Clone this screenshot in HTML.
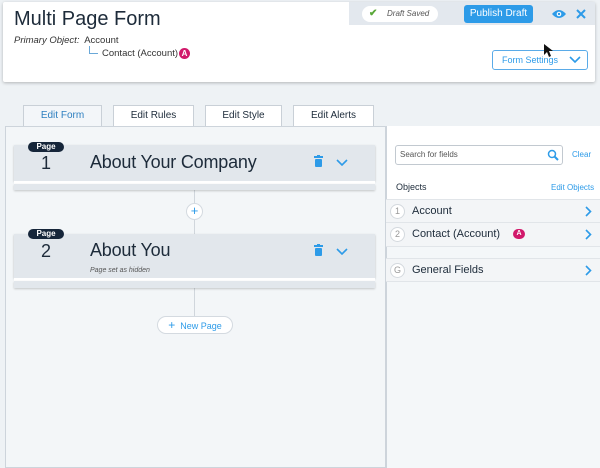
<!DOCTYPE html>
<html><head><style>
*{margin:0;padding:0;box-sizing:border-box}
body{width:600px;height:468px;overflow:hidden;background:#eef2f5;font-family:"Liberation Sans",sans-serif;position:relative;color:#1d2b3a}
.a{position:absolute}
.hdr{left:3px;top:2px;width:592px;height:80px;background:#fff;box-shadow:0 1px 3px rgba(0,0,0,.25);border-radius:2px}
.tab{top:105px;height:21px;background:#fff;border:1px solid #c9d0d7;border-bottom:none;font-size:10px;text-align:center;line-height:20px;color:#1d2b3a}
.card{left:14px;width:361px;background:#e2e7ec;box-shadow:0 1px 2px rgba(0,0,0,.25)}
.badge{background:#16263a;color:#fff;font-size:8px;font-weight:bold;border-radius:6px;width:36px;height:10px;line-height:10px;text-align:center}
.num{font-size:18px;width:36px;text-align:center}
.ttl{font-size:18px;letter-spacing:-0.2px}
.row{left:386px;width:214px;height:24px;background:#f3f5f7;border-bottom:1px solid #e1e5e9;font-size:11px;line-height:23px}
.circ{position:absolute;left:4px;top:4px;width:15px;height:15px;border:1px solid #d4d9de;border-radius:50%;background:#fff;font-size:9px;color:#999;text-align:center;line-height:13px}
.chev{position:absolute;right:8px;top:6px}
</style></head><body>
<div class="a hdr"></div>
<div class="a" style="left:349px;top:2px;width:246px;height:23px;background:#e3e8ee"></div>
<div class="a" style="left:362px;top:6px;width:76px;height:16px;background:#fff;border-radius:8px;font-size:8px;font-style:italic;color:#555;line-height:16px;padding-left:25px">Draft Saved</div>
<div class="a" style="left:369px;top:8px;color:#5aa83a;font-size:10px;font-weight:bold">✔</div>
<div class="a" style="left:464px;top:5px;width:69px;height:18px;background:#2d9be8;border-radius:3px;color:#fff;font-size:10px;text-align:center;line-height:18px">Publish Draft</div>
<svg class="a" style="left:551px;top:9px" width="16" height="10"><path d="M1 5Q8 -3 15 5Q8 13 1 5Z" fill="#2d9be8"/><circle cx="8" cy="5" r="2.3" fill="#fff"/><circle cx="8" cy="5" r="1.2" fill="#2d9be8"/></svg>
<svg class="a" style="left:576px;top:9px" width="10" height="10"><path d="M1 1L9 9M9 1L1 9" stroke="#2d9be8" stroke-width="2"/></svg>
<div class="a" style="left:14px;top:8px;font-size:20px;color:#1d2b3a">Multi Page Form</div>
<div class="a" style="left:14px;top:35px;font-size:9.5px;color:#333"><i>Primary Object:</i>&nbsp; Account</div>
<div class="a" style="left:89px;top:46px;width:9px;height:8px;border-left:1px solid #6aa8d8;border-bottom:1px solid #6aa8d8"></div>
<div class="a" style="left:102px;top:48px;font-size:9.5px;color:#333">Contact (Account)</div>
<div class="a" style="left:179px;top:48px;width:11px;height:11px;border-radius:50%;background:#d1196b;color:#fff;font-size:8px;font-weight:bold;text-align:center;line-height:11px">A</div>
<div class="a" style="left:492px;top:50px;width:96px;height:20px;border:1px solid #5aabe8;border-radius:3px;color:#2d9be8;font-size:9px;line-height:18px;padding-left:9px">Form Settings</div>
<svg class="a" style="left:569px;top:56px" width="12" height="8"><path d="M1 1L6 6L11 1" stroke="#2d9be8" stroke-width="1.6" fill="none"/></svg>
<svg class="a" style="left:543px;top:43px" width="10" height="15"><path d="M1 1L1 12L4 9L6 14L8 13L6 8L10 8Z" fill="#111"/></svg>

<div class="a tab" style="left:23px;width:79px;background:#f3f6f9;color:#2d7fc0">Edit Form</div>
<div class="a tab" style="left:113px;width:81px">Edit Rules</div>
<div class="a tab" style="left:205px;width:77px">Edit Style</div>
<div class="a tab" style="left:293px;width:81px">Edit Alerts</div>

<div class="a" style="left:5px;top:126px;width:381px;height:342px;background:#f3f6f8;border:1px solid #cdd4db"></div>
<div class="a" style="left:386px;top:126px;width:214px;height:342px;background:#f4f7f9;border-left:1px solid #cdd4db"></div>
<div class="a" style="left:387px;top:126px;width:213px;height:74px;background:#fff"></div>

<div class="a" style="left:194px;top:190px;width:1px;height:130px;background:#d0d6dc"></div>
<div class="a card" style="top:145px;height:36px"></div>
<div class="a" style="left:14px;top:181px;width:361px;height:3px;background:#fff"></div>
<div class="a" style="left:14px;top:184px;width:361px;height:6px;background:#e2e7ec;box-shadow:0 1px 2px rgba(0,0,0,.2)"></div>
<div class="a badge" style="left:28px;top:142px">Page</div>
<div class="a num" style="left:28px;top:153px">1</div>
<div class="a ttl" style="left:90px;top:152px">About Your Company</div>
<svg class="a" style="left:314px;top:155px" width="9" height="12"><rect x="0" y="1" width="9" height="2" fill="#2d9be8"/><rect x="3" y="0" width="3" height="2" fill="#2d9be8"/><rect x="1" y="4" width="7" height="8" rx="1" fill="#2d9be8"/></svg>
<svg class="a" style="left:336px;top:159px" width="12" height="7"><path d="M1 1L6 6L11 1" stroke="#2d9be8" stroke-width="1.6" fill="none"/></svg>

<div class="a" style="left:186px;top:203px;width:17px;height:17px;border-radius:50%;background:#fff;border:1px solid #d4dae0;color:#2d9be8;font-size:13px;text-align:center;line-height:14px">+</div>

<div class="a card" style="top:234px;height:44px"></div>
<div class="a" style="left:14px;top:278px;width:361px;height:3px;background:#fff"></div>
<div class="a" style="left:14px;top:281px;width:361px;height:7px;background:#e2e7ec;box-shadow:0 1px 2px rgba(0,0,0,.2)"></div>
<div class="a badge" style="left:28px;top:229px">Page</div>
<div class="a num" style="left:28px;top:241px">2</div>
<div class="a ttl" style="left:90px;top:240px">About You</div>
<div class="a" style="left:90px;top:267px;font-size:7px;font-style:italic;color:#555">Page set as hidden</div>
<svg class="a" style="left:314px;top:244px" width="9" height="12"><rect x="0" y="1" width="9" height="2" fill="#2d9be8"/><rect x="3" y="0" width="3" height="2" fill="#2d9be8"/><rect x="1" y="4" width="7" height="8" rx="1" fill="#2d9be8"/></svg>
<svg class="a" style="left:336px;top:248px" width="12" height="7"><path d="M1 1L6 6L11 1" stroke="#2d9be8" stroke-width="1.6" fill="none"/></svg>

<div class="a" style="left:157px;top:316px;width:76px;height:18px;border-radius:9px;background:#fff;border:1px solid #d4dae0;color:#2d9be8;font-size:9px;line-height:16px;text-align:center"><b style="font-size:12px;font-weight:normal">+</b>&nbsp; New Page</div>

<div class="a" style="left:395px;top:145px;width:168px;height:20px;border:1px solid #c2c9d0;border-radius:3px;background:#fff;font-size:8px;color:#555;line-height:18px;padding-left:4px">Search for fields</div>
<svg class="a" style="left:547px;top:149px" width="12" height="12"><circle cx="5" cy="5" r="3.5" stroke="#2d9be8" stroke-width="1.5" fill="none"/><path d="M7.5 7.5L11 11" stroke="#2d9be8" stroke-width="2"/></svg>
<div class="a" style="left:572px;top:150px;font-size:8px;color:#2d9be8">Clear</div>
<div class="a" style="left:396px;top:182px;font-size:9px">Objects</div>
<div class="a" style="left:551px;top:183px;font-size:8px;color:#2d9be8">Edit Objects</div>
<div class="a row" style="top:199px;border-top:1px solid #e1e5e9"><span class="circ">1</span><span style="position:absolute;left:26px">Account</span><svg class="chev" width="7" height="11"><path d="M1 1L5.5 5.5L1 10" stroke="#2d9be8" stroke-width="1.6" fill="none"/></svg></div>
<div class="a row" style="top:223px"><span class="circ">2</span><span style="position:absolute;left:26px">Contact (Account)</span><span style="position:absolute;left:127px;top:6px;width:12px;height:10px;border-radius:5px;background:#d1196b;color:#fff;font-size:7px;font-weight:bold;text-align:center;line-height:10px">A</span><svg class="chev" width="7" height="11"><path d="M1 1L5.5 5.5L1 10" stroke="#2d9be8" stroke-width="1.6" fill="none"/></svg></div>
<div class="a row" style="top:258px;border-top:1px solid #e1e5e9"><span class="circ">G</span><span style="position:absolute;left:26px">General Fields</span><svg class="chev" width="7" height="11"><path d="M1 1L5.5 5.5L1 10" stroke="#2d9be8" stroke-width="1.6" fill="none"/></svg></div>
</body></html>
